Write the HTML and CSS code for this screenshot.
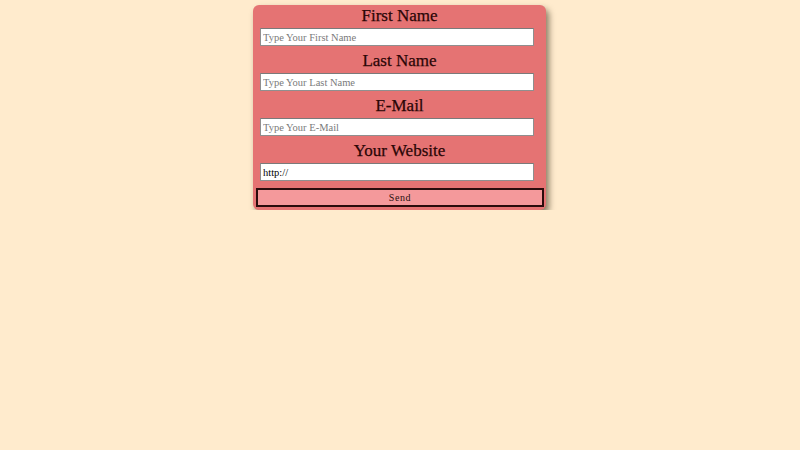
FILE: index.html
```html
<!DOCTYPE html>
<html>
<head>
<meta charset="utf-8">
<link rel="stylesheet" href="styles.css">
</head>
<body>
<form class="card">
  <div class="field">
    <label class="label">First Name</label>
    <input class="input" type="text" placeholder="Type Your First Name">
  </div>
  <div class="field">
    <label class="label">Last Name</label>
    <input class="input" type="text" placeholder="Type Your Last Name">
  </div>
  <div class="field">
    <label class="label">E-Mail</label>
    <input class="input" type="text" placeholder="Type Your E-Mail">
  </div>
  <div class="field">
    <label class="label">Your Website</label>
    <input class="input" type="text" value="http://">
  </div>
  <button class="send" type="button">Send</button>
</form>
</body>
</html>
```

FILE: styles.css
```css
html, body {
  margin: 0;
  padding: 0;
  background: #ffebcd;
  font-family: "Liberation Serif", "Times New Roman", serif;
}
body {
  padding-top: 5px;
  padding-right: 1px;
}
.card {
  width: 287px;
  margin: 0 auto;
  padding: 0 3px 3px 3px;
  background: #e57373;
  border-radius: 6px;
  box-shadow: 3px 4px 6px rgba(60, 50, 30, 0.6);
  display: flex;
  flex-direction: column;
}
.field {
  display: flex;
  flex-direction: column;
  margin-bottom: 4px;
}
.label {
  display: block;
  text-align: center;
  font-size: 17px;
  line-height: 22px;
  height: 22px;
  margin-bottom: 1px;
  color: #2a0606;
  -webkit-text-stroke: 0.25px #2a0606;
}
.input {
  box-sizing: border-box;
  width: 274px;
  height: 18px;
  margin: 0 0 0 4px;
  padding: 0 2px;
  border: 1px solid #8f8f8f;
  border-top-color: #7a7a7a;
  background: #fff;
  font-family: "Liberation Serif", "Times New Roman", serif;
  font-size: 10.5px;
  color: #000;
  outline: none;
}
.input::placeholder {
  color: #7a7a7a;
}
.send {
  box-sizing: border-box;
  margin-top: 3px;
  width: 288px;
  height: 19px;
  padding: 0;
  border: 2px solid #2a0c0c;
  background: #f4999b;
  font-family: "Liberation Serif", "Times New Roman", serif;
  font-size: 10px;
  letter-spacing: 0.6px;
  color: #2a1010;
  cursor: pointer;
}
```
